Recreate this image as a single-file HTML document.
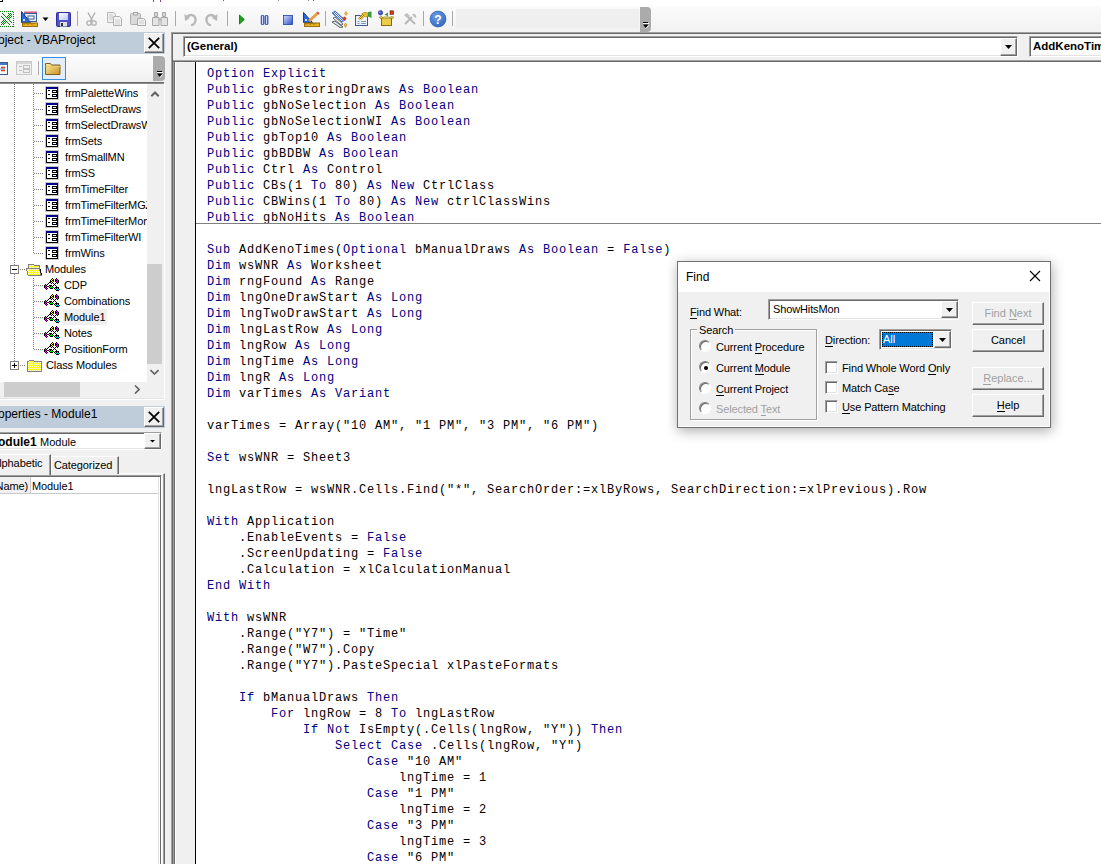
<!DOCTYPE html>
<html><head><meta charset="utf-8">
<style>
*{box-sizing:border-box}
html,body{margin:0;padding:0}
body{width:1101px;height:864px;overflow:hidden;position:relative;background:#F0F0F0;font-family:"Liberation Sans",sans-serif;font-size:11px;color:#000}
.a{position:absolute}
.code{position:absolute;left:196px;top:62px;right:0;bottom:0;background:#fff;overflow:hidden}
.code pre{margin:0;position:absolute;left:11px;top:4px;font-family:"Liberation Mono",monospace;font-size:12px;letter-spacing:0.8px;line-height:16px;color:#000;white-space:pre}
.k{color:#00007F}
.tb{position:absolute;top:6px;left:0;width:1101px;height:26px;background:linear-gradient(#FBFBFB,#F2F2F2)}
.sep{position:absolute;top:11px;width:1px;height:15px;background:#A9A9A9}
.cap{position:absolute;background:#BFCDDB;font-size:12px;height:22px;line-height:16px;white-space:nowrap;overflow:hidden}
.xbtn{position:absolute;width:20px;height:20px;background:#F0F0F0;border-top:1px solid #fff;border-left:1px solid #fff;border-right:1px solid #696969;border-bottom:1px solid #696969;box-shadow:inset -1px -1px #A0A0A0}
.tree{position:absolute;left:0;top:84px;width:147px;height:298px;background:#fff;overflow:hidden}
.ti{position:absolute;white-space:nowrap;font-size:11px;line-height:16px;height:16px;letter-spacing:-0.1px}
.dlg{position:absolute;left:677px;top:261px;width:374px;height:167px;background:#F0F0F0;border:1px solid #777;box-shadow:0 0 10px rgba(0,0,0,0.25)}
.btn{position:absolute;width:72px;height:23px;background:#F0F0F0;border-top:1px solid #fff;border-left:1px solid #fff;border-right:1px solid #696969;border-bottom:1px solid #696969;box-shadow:inset -1px -1px #A0A0A0;text-align:center;line-height:20px;font-size:11px}
.sunk{border-top:1px solid #A0A0A0;border-left:1px solid #A0A0A0;border-right:1px solid #fff;border-bottom:1px solid #fff;box-shadow:inset 1px 1px #696969, inset -1px -1px #E3E3E3}
.t11{font-size:11px;line-height:15px;white-space:nowrap;letter-spacing:-0.12px}
.t12{font-size:12px;line-height:14px;white-space:nowrap}
.ddb{position:absolute;background:#F0F0F0;border-top:1px solid #fff;border-left:1px solid #fff;border-right:1px solid #696969;border-bottom:1px solid #696969;box-shadow:inset -1px -1px #A0A0A0}
.radio{position:absolute;width:12px;height:12px;border-radius:50%;background:#fff;border:1px solid;border-color:#808080 #fff #fff #808080;box-shadow:inset 1px 1px #696969}
.chk{position:absolute;width:13px;height:13px;background:#fff;border-top:1px solid #A0A0A0;border-left:1px solid #A0A0A0;border-right:1px solid #fff;border-bottom:1px solid #fff;box-shadow:inset 1px 1px #696969, inset -1px -1px #E3E3E3}
u{text-decoration:none;border-bottom:1px solid currentColor}
</style></head><body>
<!-- top strip -->
<div class="a" style="left:0;top:0;width:1101px;height:6px;background:#fff"></div>
<div class="a" style="left:0;top:0;width:3px;height:2px;border-right:1px solid #000;border-bottom:1px solid #000"></div>
<div class="a" style="left:153px;top:0;width:1px;height:2px;background:#705080"></div>
<div class="a" style="left:160px;top:0;width:1px;height:2px;background:#705080"></div>
<div class="a" style="left:223px;top:0;width:1px;height:1px;background:#606080"></div>
<div class="a" style="left:278px;top:0;width:1px;height:1px;background:#8090B0"></div>
<div class="a" style="left:308px;top:0;width:1px;height:1px;background:#8090B0"></div>
<div class="a" style="left:313px;top:0;width:1px;height:1px;background:#606080"></div>
<!-- toolbar -->
<div class="tb"></div>
<div class="a" style="left:456px;top:9px;width:183px;height:19px;background:#EFEFEF"></div>
<div class="a" style="left:640px;top:7px;width:11px;height:25px;background:#ABABAB;border-radius:0 4px 4px 0"></div>


<!-- main toolbar icons -->
<svg class="a" style="left:0;top:11px" width="14" height="16" viewBox="0 0 14 16" shape-rendering="crispEdges" fill="#008000"><rect x="0" y="0" width="1" height="1"/><rect x="2" y="0" width="1" height="1"/><rect x="4" y="0" width="1" height="1"/><rect x="6" y="0" width="1" height="1"/><rect x="8" y="0" width="1" height="1"/><rect x="10" y="0" width="1" height="1"/><rect x="12" y="0" width="1" height="1"/><rect x="13" y="1" width="1" height="1"/><rect x="2" y="2" width="1" height="1"/><rect x="8" y="2" width="1" height="1"/><rect x="10" y="2" width="1" height="1"/><rect x="3" y="3" width="1" height="1"/><rect x="9" y="3" width="1" height="1"/><rect x="11" y="3" width="1" height="1"/><rect x="13" y="3" width="1" height="1"/><rect x="4" y="4" width="1" height="1"/><rect x="8" y="4" width="1" height="1"/><rect x="10" y="4" width="1" height="1"/><rect x="1" y="5" width="1" height="1"/><rect x="5" y="5" width="1" height="1"/><rect x="7" y="5" width="1" height="1"/><rect x="9" y="5" width="1" height="1"/><rect x="11" y="5" width="1" height="1"/><rect x="13" y="5" width="1" height="1"/><rect x="2" y="6" width="1" height="1"/><rect x="6" y="6" width="1" height="1"/><rect x="8" y="6" width="1" height="1"/><rect x="10" y="6" width="1" height="1"/><rect x="3" y="7" width="1" height="1"/><rect x="7" y="7" width="1" height="1"/><rect x="9" y="7" width="1" height="1"/><rect x="13" y="7" width="1" height="1"/><rect x="4" y="8" width="1" height="1"/><rect x="8" y="8" width="1" height="1"/><rect x="3" y="9" width="1" height="1"/><rect x="5" y="9" width="1" height="1"/><rect x="9" y="9" width="1" height="1"/><rect x="13" y="9" width="1" height="1"/><rect x="2" y="10" width="1" height="1"/><rect x="4" y="10" width="1" height="1"/><rect x="6" y="10" width="1" height="1"/><rect x="10" y="10" width="1" height="1"/><rect x="1" y="11" width="1" height="1"/><rect x="3" y="11" width="1" height="1"/><rect x="5" y="11" width="1" height="1"/><rect x="7" y="11" width="1" height="1"/><rect x="11" y="11" width="1" height="1"/><rect x="13" y="11" width="1" height="1"/><rect x="2" y="12" width="1" height="1"/><rect x="4" y="12" width="1" height="1"/><rect x="8" y="12" width="1" height="1"/><rect x="1" y="13" width="1" height="1"/><rect x="3" y="13" width="1" height="1"/><rect x="9" y="13" width="1" height="1"/><rect x="13" y="13" width="1" height="1"/><rect x="0" y="15" width="1" height="1"/><rect x="2" y="15" width="1" height="1"/><rect x="4" y="15" width="1" height="1"/><rect x="6" y="15" width="1" height="1"/><rect x="8" y="15" width="1" height="1"/><rect x="10" y="15" width="1" height="1"/><rect x="12" y="15" width="1" height="1"/><rect x="13" y="15" width="1" height="1"/></svg>
<svg class="a" style="left:21px;top:11px" width="17" height="16" viewBox="0 0 17 16"><rect x="3" y="0.5" width="13" height="2" fill="#D46080"/><rect x="3.5" y="2.5" width="12" height="8" fill="#E8EEF8" stroke="#3A5C9A"/><rect x="7" y="5" width="6" height="3" fill="#fff" stroke="#3A5C9A"/><path d="M0.5 0.5L0.5 11.5L9.5 11.5Z" fill="#2A6AD8" stroke="#1A3A8A"/><circle cx="3" cy="9" r="1" fill="#fff"/><rect x="1.5" y="12" width="15" height="3.5" fill="#E8B020" stroke="#9A7010"/><path d="M3 12v2M5 12v1M7 12v2M9 12v1M11 12v2M13 12v1" stroke="#7A5000" stroke-width=".6"/></svg>
<svg class="a" style="left:42px;top:17px" width="7" height="5" viewBox="0 0 7 5"><path d="M0.5 0.5H6.5L3.5 4Z" fill="#000"/></svg>
<svg class="a" style="left:56px;top:12px" width="15" height="15" viewBox="0 0 15 15"><rect x="0.5" y="0.5" width="14" height="14" rx="1" fill="#5050C8" stroke="#30309A"/><rect x="3" y="1" width="9" height="7" fill="#F0F4FF"/><path d="M3 1h9v7h-9z" fill="url(#sv)"/><rect x="4" y="10" width="7" height="4.5" fill="#E0E0E0"/><rect x="5" y="11" width="2" height="3" fill="#303030"/><defs><linearGradient id="sv" x1="0" y1="0" x2="1" y2="1"><stop offset="0" stop-color="#fff"/><stop offset="1" stop-color="#B8C8F0"/></linearGradient></defs></svg>
<div class="sep" style="left:77px"></div>
<svg class="a" style="left:86px;top:12px" width="11" height="14" viewBox="0 0 11 14"><path d="M2 0.5L6.5 9M9 0.5L4.5 9" stroke="#B0B0B0" stroke-width="1.4" fill="none"/><circle cx="3" cy="11" r="2.2" fill="none" stroke="#B0B0B0" stroke-width="1.3"/><circle cx="8" cy="11" r="2.2" fill="none" stroke="#B0B0B0" stroke-width="1.3"/></svg>
<svg class="a" style="left:107px;top:12px" width="16" height="14" viewBox="0 0 16 14"><path d="M0.5 0.5h6l2 2v8h-8z" fill="#EFEFEF" stroke="#B8B8B8"/><path d="M6.5 4.5h6l2 2v7h-8z" fill="#F4F4F4" stroke="#B0B0B0"/><path d="M8 8h5M8 10h5M8 12h5M2 3h4M2 5h4M2 7h4" stroke="#C4C4C4" stroke-width=".8"/></svg>
<svg class="a" style="left:130px;top:12px" width="17" height="14" viewBox="0 0 17 14"><rect x="0.5" y="1.5" width="10" height="11" rx="1" fill="#DADADA" stroke="#B0B0B0"/><rect x="3.5" y="0.5" width="4" height="2.5" fill="#E8E8E8" stroke="#A8A8A8"/><path d="M7.5 6.5h6l2 2v5h-8z" fill="#F2F2F2" stroke="#A8A8A8"/><path d="M9 9h5M9 11h5" stroke="#C0C0C0" stroke-width=".8"/></svg>
<svg class="a" style="left:152px;top:12px" width="16" height="14" viewBox="0 0 16 14"><path d="M2.5 0.5h3v4h-3zM10.5 0.5h3v4h-3z" fill="#D8D8D8" stroke="#A8A8A8"/><path d="M0.5 5.5h6.5v8h-6.5zM9 5.5h6.5v8h-6.5z" fill="#E4E4E4" stroke="#A8A8A8"/><rect x="6.5" y="6" width="3" height="3" fill="#B8B8B8"/></svg>
<div class="sep" style="left:175px"></div>
<svg class="a" style="left:184px;top:12px" width="13" height="14" viewBox="0 0 13 14"><path d="M3 5.5C5 2 11 2 11.5 7C12 11 9 13 7 13.5" stroke="#B8B8B8" stroke-width="2.3" fill="none"/><path d="M0.5 2L1 9L6 6Z" fill="#B8B8B8"/></svg>
<svg class="a" style="left:205px;top:12px" width="13" height="14" viewBox="0 0 13 14"><path d="M10 5.5C8 2 2 2 1.5 7C1 11 4 13 6 13.5" stroke="#B8B8B8" stroke-width="2.3" fill="none"/><path d="M12.5 2L12 9L7 6Z" fill="#B8B8B8"/></svg>
<div class="sep" style="left:227px"></div>
<svg class="a" style="left:238px;top:14px" width="8" height="11" viewBox="0 0 8 11"><path d="M1.5 1L6.3 5.5L1.5 10Z" fill="#20A020" stroke="#0A7A0A" stroke-width=".9" stroke-linejoin="round"/></svg>
<svg class="a" style="left:260px;top:15px" width="10" height="10" viewBox="0 0 10 10"><defs><linearGradient id="pb" x1="0" x2="1"><stop offset="0" stop-color="#2848B8"/><stop offset=".5" stop-color="#D8E4FF"/><stop offset="1" stop-color="#2848B8"/></linearGradient></defs><rect x="1.2" y="0.5" width="2.8" height="9" rx=".6" fill="url(#pb)" stroke="#1A38A0" stroke-width=".7"/><rect x="5.2" y="0.5" width="2.8" height="9" rx=".6" fill="url(#pb)" stroke="#1A38A0" stroke-width=".7"/></svg>
<svg class="a" style="left:283px;top:15px" width="10" height="10" viewBox="0 0 10 10"><defs><linearGradient id="sb" x1="0" y1="0" x2="1" y2="1"><stop offset="0" stop-color="#D0DCFF"/><stop offset="1" stop-color="#3050C8"/></linearGradient></defs><rect x="0.5" y="0.5" width="9" height="9" fill="url(#sb)" stroke="#2040A8" stroke-width=".8"/></svg>
<svg class="a" style="left:303px;top:11px" width="17" height="16" viewBox="0 0 17 16"><path d="M0.5 1.5L0.5 11.5L9.5 11.5Z" fill="#2A6AD8" stroke="#1A3A8A"/><circle cx="3" cy="9" r="1" fill="#fff"/><path d="M6 10L15 2" stroke="#E0A040" stroke-width="3"/><path d="M14 1l2 2" stroke="#D06060" stroke-width="2"/><rect x="1.5" y="12" width="15" height="3.5" fill="#E8B020" stroke="#9A7010"/><path d="M3 12v2M5 12v1M7 12v2M9 12v1M11 12v2M13 12v1" stroke="#7A5000" stroke-width=".6"/></svg>
<div class="sep" style="left:325px"></div>
<svg class="a" style="left:331px;top:10px" width="18" height="18" viewBox="0 0 18 18"><defs><pattern id="bw" width="2" height="2" patternUnits="userSpaceOnUse"><rect width="2" height="2" fill="#3C78E0"/><rect width="1" height="1" fill="#E8F0FF"/><rect x="1" y="1" width="1" height="1" fill="#E8F0FF"/></pattern></defs><path d="M1 3L4 1L14 10L11 12Z" fill="url(#bw)" stroke="#2A58B8" stroke-width=".8"/><path d="M2 8L4 7L12 14L10 15Z" fill="#F4F4F4" stroke="#404850" stroke-width=".8"/><path d="M1 12L4 11L12 17L9 17.5Z" fill="#E0E4EA" stroke="#505860" stroke-width=".9"/><path d="M15 1.5l1.5 2-1.5 2-1.5-2z" fill="#F0C040" stroke="#C08010" stroke-width=".6"/><path d="M14.5 13l1.5 2-1.5 2.5-1.5-2.5z" fill="#F0C040" stroke="#C08010" stroke-width=".6"/><path d="M13.5 6.5l2 1.5-1 2.5-2.5-.5-.5-2z" fill="#E03818"/></svg>
<svg class="a" style="left:355px;top:11px" width="17" height="16" viewBox="0 0 17 16"><defs><pattern id="yk" width="2" height="2" patternUnits="userSpaceOnUse"><rect width="2" height="2" fill="#F4D050"/><rect width="1" height="1" fill="#A07810"/><rect x="1" y="1" width="1" height="1" fill="#A07810"/></pattern></defs><rect x="0.5" y="4.5" width="12" height="10" fill="#EAF2FC" stroke="#3A5A8A"/><path d="M2.5 10.5h2M6 10.5h5M2.5 12.5h2M6 12.5h5" stroke="#7A8AA8" stroke-width=".9"/><path d="M3 8L7 2.5L10 5L6 9Z" fill="url(#yk)"/><path d="M7 2.5Q10 0.5 13 2L13 5.5Q10 6 9.5 5.5Z" fill="#E8C040" stroke="#A88010" stroke-width=".6"/><path d="M13 1L16.5 0.5L16.5 7L13 5.5Z" fill="#3A9A40"/></svg>
<svg class="a" style="left:378px;top:10px" width="17" height="17" viewBox="0 0 17 17"><circle cx="2.5" cy="2.8" r="2.2" fill="#4050C8" stroke="#202878" stroke-width=".6"/><circle cx="2" cy="2.2" r=".7" fill="#B8C8FF"/><path d="M6.5 4.5L10 2.5L10 6.5Z" fill="#40A040"/><rect x="12" y="0.8" width="3.6" height="3.6" fill="#D83820" stroke="#602010" stroke-width=".6"/><path d="M3 9L1 7.2L4 6.5L6 8.5M14 9L16 7.2L13 6.5L11 8.5" fill="#F0D050" stroke="#A08010" stroke-width=".7"/><rect x="3.5" y="8.5" width="10" height="7" fill="#ECCC48" stroke="#8A6A10"/><path d="M3.5 8.5L6 7h5l2.5 1.5" fill="#F8E890" stroke="#8A6A10" stroke-width=".7"/></svg>
<svg class="a" style="left:403px;top:12px" width="14" height="14" viewBox="0 0 14 14"><path d="M2 12L9 5M12 12L5 5" stroke="#B8B8B8" stroke-width="2"/><path d="M1 3l3-2 3 3-3 2zM9 2a3 3 0 0 1 4 4l-2-1z" fill="#C0C0C0"/></svg>
<div class="sep" style="left:423px"></div>
<svg class="a" style="left:429px;top:10px" width="18" height="18" viewBox="0 0 18 18"><defs><radialGradient id="hg" cx="0.4" cy="0.35" r="0.7"><stop offset="0" stop-color="#6FA0E8"/><stop offset="1" stop-color="#2F66C0"/></radialGradient></defs><circle cx="9" cy="9" r="8" fill="url(#hg)" stroke="#2A5AAA" stroke-width=".6"/><text x="9" y="13.5" text-anchor="middle" font-family="Liberation Sans" font-weight="bold" font-size="12" fill="#fff">?</text></svg>
<div class="sep" style="left:452px"></div>
<!-- project panel -->
<div class="cap" style="left:0;top:32px;width:165px;padding-left:0"><span style="position:relative;left:-14px">Project - VBAProject</span></div>
<div class="xbtn" style="left:144px;top:33px"></div>
<div class="a" style="left:0;top:54px;width:165px;height:28px;background:linear-gradient(#FDFDFD,#F0F0F0)"></div>
<div class="a" style="left:0;top:82px;width:164px;height:3px;background:linear-gradient(#696969 0 1px,#8A8A8A 1px 2px,#696969 2px 3px)"></div>
<div class="tree"></div>
<div class="a" style="left:14px;top:84px;width:1px;height:282px;background:repeating-linear-gradient(180deg,#808080 0 1px,transparent 1px 2px)"></div>
<div class="a" style="left:33px;top:84px;width:1px;height:170px;background:repeating-linear-gradient(180deg,#808080 0 1px,transparent 1px 2px)"></div>
<div class="a" style="left:34px;top:93px;width:10px;height:1px;background:repeating-linear-gradient(90deg,#808080 0 1px,transparent 1px 2px)"></div>
<svg class="a" style="left:45px;top:86px" width="14" height="14" viewBox="0 0 14 14"><rect x="0.5" y="0.5" width="13" height="13" fill="none" stroke="#C8C8C8"/><rect x="1.5" y="1.5" width="11" height="11" fill="#fff" stroke="#000"/><rect x="1" y="1" width="12" height="2" fill="#000080"/><path d="M3 4.5H5M3 8.5H5" stroke="#000"/><rect x="7.5" y="4.5" width="4" height="2" fill="none" stroke="#000"/><rect x="7.5" y="8.5" width="4" height="2" fill="none" stroke="#000"/></svg>
<div class="ti" style="left:65px;top:85px">frmPaletteWins</div>
<div class="a" style="left:34px;top:109px;width:10px;height:1px;background:repeating-linear-gradient(90deg,#808080 0 1px,transparent 1px 2px)"></div>
<svg class="a" style="left:45px;top:102px" width="14" height="14" viewBox="0 0 14 14"><rect x="0.5" y="0.5" width="13" height="13" fill="none" stroke="#C8C8C8"/><rect x="1.5" y="1.5" width="11" height="11" fill="#fff" stroke="#000"/><rect x="1" y="1" width="12" height="2" fill="#000080"/><path d="M3 4.5H5M3 8.5H5" stroke="#000"/><rect x="7.5" y="4.5" width="4" height="2" fill="none" stroke="#000"/><rect x="7.5" y="8.5" width="4" height="2" fill="none" stroke="#000"/></svg>
<div class="ti" style="left:65px;top:101px">frmSelectDraws</div>
<div class="a" style="left:34px;top:125px;width:10px;height:1px;background:repeating-linear-gradient(90deg,#808080 0 1px,transparent 1px 2px)"></div>
<svg class="a" style="left:45px;top:118px" width="14" height="14" viewBox="0 0 14 14"><rect x="0.5" y="0.5" width="13" height="13" fill="none" stroke="#C8C8C8"/><rect x="1.5" y="1.5" width="11" height="11" fill="#fff" stroke="#000"/><rect x="1" y="1" width="12" height="2" fill="#000080"/><path d="M3 4.5H5M3 8.5H5" stroke="#000"/><rect x="7.5" y="4.5" width="4" height="2" fill="none" stroke="#000"/><rect x="7.5" y="8.5" width="4" height="2" fill="none" stroke="#000"/></svg>
<div class="ti" style="left:65px;top:117px">frmSelectDrawsWI</div>
<div class="a" style="left:34px;top:141px;width:10px;height:1px;background:repeating-linear-gradient(90deg,#808080 0 1px,transparent 1px 2px)"></div>
<svg class="a" style="left:45px;top:134px" width="14" height="14" viewBox="0 0 14 14"><rect x="0.5" y="0.5" width="13" height="13" fill="none" stroke="#C8C8C8"/><rect x="1.5" y="1.5" width="11" height="11" fill="#fff" stroke="#000"/><rect x="1" y="1" width="12" height="2" fill="#000080"/><path d="M3 4.5H5M3 8.5H5" stroke="#000"/><rect x="7.5" y="4.5" width="4" height="2" fill="none" stroke="#000"/><rect x="7.5" y="8.5" width="4" height="2" fill="none" stroke="#000"/></svg>
<div class="ti" style="left:65px;top:133px">frmSets</div>
<div class="a" style="left:34px;top:157px;width:10px;height:1px;background:repeating-linear-gradient(90deg,#808080 0 1px,transparent 1px 2px)"></div>
<svg class="a" style="left:45px;top:150px" width="14" height="14" viewBox="0 0 14 14"><rect x="0.5" y="0.5" width="13" height="13" fill="none" stroke="#C8C8C8"/><rect x="1.5" y="1.5" width="11" height="11" fill="#fff" stroke="#000"/><rect x="1" y="1" width="12" height="2" fill="#000080"/><path d="M3 4.5H5M3 8.5H5" stroke="#000"/><rect x="7.5" y="4.5" width="4" height="2" fill="none" stroke="#000"/><rect x="7.5" y="8.5" width="4" height="2" fill="none" stroke="#000"/></svg>
<div class="ti" style="left:65px;top:149px">frmSmallMN</div>
<div class="a" style="left:34px;top:173px;width:10px;height:1px;background:repeating-linear-gradient(90deg,#808080 0 1px,transparent 1px 2px)"></div>
<svg class="a" style="left:45px;top:166px" width="14" height="14" viewBox="0 0 14 14"><rect x="0.5" y="0.5" width="13" height="13" fill="none" stroke="#C8C8C8"/><rect x="1.5" y="1.5" width="11" height="11" fill="#fff" stroke="#000"/><rect x="1" y="1" width="12" height="2" fill="#000080"/><path d="M3 4.5H5M3 8.5H5" stroke="#000"/><rect x="7.5" y="4.5" width="4" height="2" fill="none" stroke="#000"/><rect x="7.5" y="8.5" width="4" height="2" fill="none" stroke="#000"/></svg>
<div class="ti" style="left:65px;top:165px">frmSS</div>
<div class="a" style="left:34px;top:189px;width:10px;height:1px;background:repeating-linear-gradient(90deg,#808080 0 1px,transparent 1px 2px)"></div>
<svg class="a" style="left:45px;top:182px" width="14" height="14" viewBox="0 0 14 14"><rect x="0.5" y="0.5" width="13" height="13" fill="none" stroke="#C8C8C8"/><rect x="1.5" y="1.5" width="11" height="11" fill="#fff" stroke="#000"/><rect x="1" y="1" width="12" height="2" fill="#000080"/><path d="M3 4.5H5M3 8.5H5" stroke="#000"/><rect x="7.5" y="4.5" width="4" height="2" fill="none" stroke="#000"/><rect x="7.5" y="8.5" width="4" height="2" fill="none" stroke="#000"/></svg>
<div class="ti" style="left:65px;top:181px">frmTimeFilter</div>
<div class="a" style="left:34px;top:205px;width:10px;height:1px;background:repeating-linear-gradient(90deg,#808080 0 1px,transparent 1px 2px)"></div>
<svg class="a" style="left:45px;top:198px" width="14" height="14" viewBox="0 0 14 14"><rect x="0.5" y="0.5" width="13" height="13" fill="none" stroke="#C8C8C8"/><rect x="1.5" y="1.5" width="11" height="11" fill="#fff" stroke="#000"/><rect x="1" y="1" width="12" height="2" fill="#000080"/><path d="M3 4.5H5M3 8.5H5" stroke="#000"/><rect x="7.5" y="4.5" width="4" height="2" fill="none" stroke="#000"/><rect x="7.5" y="8.5" width="4" height="2" fill="none" stroke="#000"/></svg>
<div class="ti" style="left:65px;top:197px">frmTimeFilterMGZ</div>
<div class="a" style="left:34px;top:221px;width:10px;height:1px;background:repeating-linear-gradient(90deg,#808080 0 1px,transparent 1px 2px)"></div>
<svg class="a" style="left:45px;top:214px" width="14" height="14" viewBox="0 0 14 14"><rect x="0.5" y="0.5" width="13" height="13" fill="none" stroke="#C8C8C8"/><rect x="1.5" y="1.5" width="11" height="11" fill="#fff" stroke="#000"/><rect x="1" y="1" width="12" height="2" fill="#000080"/><path d="M3 4.5H5M3 8.5H5" stroke="#000"/><rect x="7.5" y="4.5" width="4" height="2" fill="none" stroke="#000"/><rect x="7.5" y="8.5" width="4" height="2" fill="none" stroke="#000"/></svg>
<div class="ti" style="left:65px;top:213px">frmTimeFilterMon</div>
<div class="a" style="left:34px;top:237px;width:10px;height:1px;background:repeating-linear-gradient(90deg,#808080 0 1px,transparent 1px 2px)"></div>
<svg class="a" style="left:45px;top:230px" width="14" height="14" viewBox="0 0 14 14"><rect x="0.5" y="0.5" width="13" height="13" fill="none" stroke="#C8C8C8"/><rect x="1.5" y="1.5" width="11" height="11" fill="#fff" stroke="#000"/><rect x="1" y="1" width="12" height="2" fill="#000080"/><path d="M3 4.5H5M3 8.5H5" stroke="#000"/><rect x="7.5" y="4.5" width="4" height="2" fill="none" stroke="#000"/><rect x="7.5" y="8.5" width="4" height="2" fill="none" stroke="#000"/></svg>
<div class="ti" style="left:65px;top:229px">frmTimeFilterWI</div>
<div class="a" style="left:34px;top:253px;width:10px;height:1px;background:repeating-linear-gradient(90deg,#808080 0 1px,transparent 1px 2px)"></div>
<svg class="a" style="left:45px;top:246px" width="14" height="14" viewBox="0 0 14 14"><rect x="0.5" y="0.5" width="13" height="13" fill="none" stroke="#C8C8C8"/><rect x="1.5" y="1.5" width="11" height="11" fill="#fff" stroke="#000"/><rect x="1" y="1" width="12" height="2" fill="#000080"/><path d="M3 4.5H5M3 8.5H5" stroke="#000"/><rect x="7.5" y="4.5" width="4" height="2" fill="none" stroke="#000"/><rect x="7.5" y="8.5" width="4" height="2" fill="none" stroke="#000"/></svg>
<div class="ti" style="left:65px;top:245px">frmWins</div>
<div class="a" style="left:20px;top:269px;width:6px;height:1px;background:repeating-linear-gradient(90deg,#808080 0 1px,transparent 1px 2px)"></div>
<div class="a" style="left:10px;top:265px;width:9px;height:9px;border:1px solid #808080;background:#fff"><div style="position:absolute;left:1px;top:3px;width:5px;height:1px;background:#000"></div></div>
<svg class="a" style="left:26px;top:263px" width="16" height="13" viewBox="0 0 16 13" shape-rendering="crispEdges"><defs><pattern id="dy" width="2" height="2" patternUnits="userSpaceOnUse"><rect width="2" height="2" fill="#FFFF00"/><rect width="1" height="1" fill="#FFFFC0"/><rect x="1" y="1" width="1" height="1" fill="#FFFFC0"/></pattern></defs><path d="M2.5 1.5h5l1 1h5v4h-11z" fill="url(#dy)" stroke="#808080"/><path d="M0.5 5.5h13l1.5 6.5h-13z" fill="url(#dy)" stroke="#808080"/><path d="M14 6l1.5 6" stroke="#000"/></svg>
<div class="ti" style="left:45px;top:261px">Modules</div>
<div class="a" style="left:33px;top:278px;width:1px;height:72px;background:repeating-linear-gradient(180deg,#808080 0 1px,transparent 1px 2px)"></div>
<div class="a" style="left:34px;top:285px;width:9px;height:1px;background:repeating-linear-gradient(90deg,#808080 0 1px,transparent 1px 2px)"></div>
<svg class="a" style="left:40px;top:276px" width="22" height="16" viewBox="0 0 22 16" shape-rendering="crispEdges"><rect x="12" y="2" width="1" height="1" fill="#000"/><rect x="16" y="2" width="1" height="1" fill="#000"/><rect x="11" y="3" width="1" height="1" fill="#000"/><rect x="12" y="3" width="1" height="1" fill="#FFFF00"/><rect x="13" y="3" width="1" height="1" fill="#000"/><rect x="15" y="3" width="1" height="1" fill="#000"/><rect x="16" y="3" width="1" height="1" fill="#FF00FF"/><rect x="17" y="3" width="1" height="1" fill="#000"/><rect x="10" y="4" width="1" height="1" fill="#000"/><rect x="11" y="4" width="1" height="1" fill="#FFFF00"/><rect x="12" y="4" width="1" height="1" fill="#000"/><rect x="13" y="4" width="1" height="1" fill="#000"/><rect x="15" y="4" width="1" height="1" fill="#000"/><rect x="16" y="4" width="1" height="1" fill="#000"/><rect x="17" y="4" width="1" height="1" fill="#FF00FF"/><rect x="18" y="4" width="1" height="1" fill="#000"/><rect x="10" y="5" width="1" height="1" fill="#000"/><rect x="11" y="5" width="1" height="1" fill="#000"/><rect x="12" y="5" width="1" height="1" fill="#FFFF00"/><rect x="13" y="5" width="1" height="1" fill="#000"/><rect x="15" y="5" width="1" height="1" fill="#000"/><rect x="16" y="5" width="1" height="1" fill="#FF00FF"/><rect x="17" y="5" width="1" height="1" fill="#000"/><rect x="18" y="5" width="1" height="1" fill="#000"/><rect x="9" y="6" width="1" height="1" fill="#000"/><rect x="10" y="6" width="1" height="1" fill="#000"/><rect x="11" y="6" width="1" height="1" fill="#FFFF00"/><rect x="12" y="6" width="1" height="1" fill="#000"/><rect x="16" y="6" width="1" height="1" fill="#000"/><rect x="17" y="6" width="1" height="1" fill="#FF00FF"/><rect x="18" y="6" width="1" height="1" fill="#000"/><rect x="8" y="7" width="1" height="1" fill="#000"/><rect x="11" y="7" width="1" height="1" fill="#000"/><rect x="13" y="7" width="1" height="1" fill="#000"/><rect x="15" y="7" width="1" height="1" fill="#000"/><rect x="17" y="7" width="1" height="1" fill="#000"/><rect x="5" y="8" width="1" height="1" fill="#000"/><rect x="7" y="8" width="1" height="1" fill="#000"/><rect x="14" y="8" width="1" height="1" fill="#000"/><rect x="4" y="9" width="1" height="1" fill="#000"/><rect x="5" y="9" width="1" height="1" fill="#FF00FF"/><rect x="6" y="9" width="1" height="1" fill="#000"/><rect x="9" y="9" width="1" height="1" fill="#000"/><rect x="10" y="9" width="1" height="1" fill="#000"/><rect x="11" y="9" width="1" height="1" fill="#000"/><rect x="13" y="9" width="1" height="1" fill="#000"/><rect x="15" y="9" width="1" height="1" fill="#000"/><rect x="4" y="10" width="1" height="1" fill="#000"/><rect x="5" y="10" width="1" height="1" fill="#000"/><rect x="6" y="10" width="1" height="1" fill="#FF00FF"/><rect x="7" y="10" width="1" height="1" fill="#000"/><rect x="8" y="10" width="1" height="1" fill="#000"/><rect x="9" y="10" width="1" height="1" fill="#00FF00"/><rect x="10" y="10" width="1" height="1" fill="#000"/><rect x="11" y="10" width="1" height="1" fill="#00FF00"/><rect x="12" y="10" width="1" height="1" fill="#000"/><rect x="16" y="10" width="1" height="1" fill="#000"/><rect x="4" y="11" width="1" height="1" fill="#000"/><rect x="5" y="11" width="1" height="1" fill="#FF00FF"/><rect x="6" y="11" width="1" height="1" fill="#000"/><rect x="9" y="11" width="1" height="1" fill="#000"/><rect x="10" y="11" width="1" height="1" fill="#00FF00"/><rect x="11" y="11" width="1" height="1" fill="#000"/><rect x="12" y="11" width="1" height="1" fill="#00FF00"/><rect x="13" y="11" width="1" height="1" fill="#000"/><rect x="15" y="11" width="1" height="1" fill="#000"/><rect x="16" y="11" width="1" height="1" fill="#000"/><rect x="17" y="11" width="1" height="1" fill="#000"/><rect x="18" y="11" width="1" height="1" fill="#000"/><rect x="5" y="12" width="1" height="1" fill="#000"/><rect x="6" y="12" width="1" height="1" fill="#FF00FF"/><rect x="7" y="12" width="1" height="1" fill="#000"/><rect x="10" y="12" width="1" height="1" fill="#000"/><rect x="11" y="12" width="1" height="1" fill="#000"/><rect x="12" y="12" width="1" height="1" fill="#000"/><rect x="14" y="12" width="1" height="1" fill="#000"/><rect x="15" y="12" width="1" height="1" fill="#00FFFF"/><rect x="16" y="12" width="1" height="1" fill="#000"/><rect x="17" y="12" width="1" height="1" fill="#00FFFF"/><rect x="18" y="12" width="1" height="1" fill="#000"/><rect x="6" y="13" width="1" height="1" fill="#000"/><rect x="15" y="13" width="1" height="1" fill="#000"/><rect x="16" y="13" width="1" height="1" fill="#00FFFF"/><rect x="17" y="13" width="1" height="1" fill="#000"/><rect x="18" y="13" width="1" height="1" fill="#00FFFF"/><rect x="19" y="13" width="1" height="1" fill="#000"/><rect x="16" y="14" width="1" height="1" fill="#000"/><rect x="17" y="14" width="1" height="1" fill="#000"/><rect x="18" y="14" width="1" height="1" fill="#000"/></svg>
<div class="ti" style="left:64px;top:277px">CDP</div>
<div class="a" style="left:34px;top:301px;width:9px;height:1px;background:repeating-linear-gradient(90deg,#808080 0 1px,transparent 1px 2px)"></div>
<svg class="a" style="left:40px;top:292px" width="22" height="16" viewBox="0 0 22 16" shape-rendering="crispEdges"><rect x="12" y="2" width="1" height="1" fill="#000"/><rect x="16" y="2" width="1" height="1" fill="#000"/><rect x="11" y="3" width="1" height="1" fill="#000"/><rect x="12" y="3" width="1" height="1" fill="#FFFF00"/><rect x="13" y="3" width="1" height="1" fill="#000"/><rect x="15" y="3" width="1" height="1" fill="#000"/><rect x="16" y="3" width="1" height="1" fill="#FF00FF"/><rect x="17" y="3" width="1" height="1" fill="#000"/><rect x="10" y="4" width="1" height="1" fill="#000"/><rect x="11" y="4" width="1" height="1" fill="#FFFF00"/><rect x="12" y="4" width="1" height="1" fill="#000"/><rect x="13" y="4" width="1" height="1" fill="#000"/><rect x="15" y="4" width="1" height="1" fill="#000"/><rect x="16" y="4" width="1" height="1" fill="#000"/><rect x="17" y="4" width="1" height="1" fill="#FF00FF"/><rect x="18" y="4" width="1" height="1" fill="#000"/><rect x="10" y="5" width="1" height="1" fill="#000"/><rect x="11" y="5" width="1" height="1" fill="#000"/><rect x="12" y="5" width="1" height="1" fill="#FFFF00"/><rect x="13" y="5" width="1" height="1" fill="#000"/><rect x="15" y="5" width="1" height="1" fill="#000"/><rect x="16" y="5" width="1" height="1" fill="#FF00FF"/><rect x="17" y="5" width="1" height="1" fill="#000"/><rect x="18" y="5" width="1" height="1" fill="#000"/><rect x="9" y="6" width="1" height="1" fill="#000"/><rect x="10" y="6" width="1" height="1" fill="#000"/><rect x="11" y="6" width="1" height="1" fill="#FFFF00"/><rect x="12" y="6" width="1" height="1" fill="#000"/><rect x="16" y="6" width="1" height="1" fill="#000"/><rect x="17" y="6" width="1" height="1" fill="#FF00FF"/><rect x="18" y="6" width="1" height="1" fill="#000"/><rect x="8" y="7" width="1" height="1" fill="#000"/><rect x="11" y="7" width="1" height="1" fill="#000"/><rect x="13" y="7" width="1" height="1" fill="#000"/><rect x="15" y="7" width="1" height="1" fill="#000"/><rect x="17" y="7" width="1" height="1" fill="#000"/><rect x="5" y="8" width="1" height="1" fill="#000"/><rect x="7" y="8" width="1" height="1" fill="#000"/><rect x="14" y="8" width="1" height="1" fill="#000"/><rect x="4" y="9" width="1" height="1" fill="#000"/><rect x="5" y="9" width="1" height="1" fill="#FF00FF"/><rect x="6" y="9" width="1" height="1" fill="#000"/><rect x="9" y="9" width="1" height="1" fill="#000"/><rect x="10" y="9" width="1" height="1" fill="#000"/><rect x="11" y="9" width="1" height="1" fill="#000"/><rect x="13" y="9" width="1" height="1" fill="#000"/><rect x="15" y="9" width="1" height="1" fill="#000"/><rect x="4" y="10" width="1" height="1" fill="#000"/><rect x="5" y="10" width="1" height="1" fill="#000"/><rect x="6" y="10" width="1" height="1" fill="#FF00FF"/><rect x="7" y="10" width="1" height="1" fill="#000"/><rect x="8" y="10" width="1" height="1" fill="#000"/><rect x="9" y="10" width="1" height="1" fill="#00FF00"/><rect x="10" y="10" width="1" height="1" fill="#000"/><rect x="11" y="10" width="1" height="1" fill="#00FF00"/><rect x="12" y="10" width="1" height="1" fill="#000"/><rect x="16" y="10" width="1" height="1" fill="#000"/><rect x="4" y="11" width="1" height="1" fill="#000"/><rect x="5" y="11" width="1" height="1" fill="#FF00FF"/><rect x="6" y="11" width="1" height="1" fill="#000"/><rect x="9" y="11" width="1" height="1" fill="#000"/><rect x="10" y="11" width="1" height="1" fill="#00FF00"/><rect x="11" y="11" width="1" height="1" fill="#000"/><rect x="12" y="11" width="1" height="1" fill="#00FF00"/><rect x="13" y="11" width="1" height="1" fill="#000"/><rect x="15" y="11" width="1" height="1" fill="#000"/><rect x="16" y="11" width="1" height="1" fill="#000"/><rect x="17" y="11" width="1" height="1" fill="#000"/><rect x="18" y="11" width="1" height="1" fill="#000"/><rect x="5" y="12" width="1" height="1" fill="#000"/><rect x="6" y="12" width="1" height="1" fill="#FF00FF"/><rect x="7" y="12" width="1" height="1" fill="#000"/><rect x="10" y="12" width="1" height="1" fill="#000"/><rect x="11" y="12" width="1" height="1" fill="#000"/><rect x="12" y="12" width="1" height="1" fill="#000"/><rect x="14" y="12" width="1" height="1" fill="#000"/><rect x="15" y="12" width="1" height="1" fill="#00FFFF"/><rect x="16" y="12" width="1" height="1" fill="#000"/><rect x="17" y="12" width="1" height="1" fill="#00FFFF"/><rect x="18" y="12" width="1" height="1" fill="#000"/><rect x="6" y="13" width="1" height="1" fill="#000"/><rect x="15" y="13" width="1" height="1" fill="#000"/><rect x="16" y="13" width="1" height="1" fill="#00FFFF"/><rect x="17" y="13" width="1" height="1" fill="#000"/><rect x="18" y="13" width="1" height="1" fill="#00FFFF"/><rect x="19" y="13" width="1" height="1" fill="#000"/><rect x="16" y="14" width="1" height="1" fill="#000"/><rect x="17" y="14" width="1" height="1" fill="#000"/><rect x="18" y="14" width="1" height="1" fill="#000"/></svg>
<div class="ti" style="left:64px;top:293px">Combinations</div>
<div class="a" style="left:34px;top:317px;width:9px;height:1px;background:repeating-linear-gradient(90deg,#808080 0 1px,transparent 1px 2px)"></div>
<svg class="a" style="left:40px;top:308px" width="22" height="16" viewBox="0 0 22 16" shape-rendering="crispEdges"><rect x="12" y="2" width="1" height="1" fill="#000"/><rect x="16" y="2" width="1" height="1" fill="#000"/><rect x="11" y="3" width="1" height="1" fill="#000"/><rect x="12" y="3" width="1" height="1" fill="#FFFF00"/><rect x="13" y="3" width="1" height="1" fill="#000"/><rect x="15" y="3" width="1" height="1" fill="#000"/><rect x="16" y="3" width="1" height="1" fill="#FF00FF"/><rect x="17" y="3" width="1" height="1" fill="#000"/><rect x="10" y="4" width="1" height="1" fill="#000"/><rect x="11" y="4" width="1" height="1" fill="#FFFF00"/><rect x="12" y="4" width="1" height="1" fill="#000"/><rect x="13" y="4" width="1" height="1" fill="#000"/><rect x="15" y="4" width="1" height="1" fill="#000"/><rect x="16" y="4" width="1" height="1" fill="#000"/><rect x="17" y="4" width="1" height="1" fill="#FF00FF"/><rect x="18" y="4" width="1" height="1" fill="#000"/><rect x="10" y="5" width="1" height="1" fill="#000"/><rect x="11" y="5" width="1" height="1" fill="#000"/><rect x="12" y="5" width="1" height="1" fill="#FFFF00"/><rect x="13" y="5" width="1" height="1" fill="#000"/><rect x="15" y="5" width="1" height="1" fill="#000"/><rect x="16" y="5" width="1" height="1" fill="#FF00FF"/><rect x="17" y="5" width="1" height="1" fill="#000"/><rect x="18" y="5" width="1" height="1" fill="#000"/><rect x="9" y="6" width="1" height="1" fill="#000"/><rect x="10" y="6" width="1" height="1" fill="#000"/><rect x="11" y="6" width="1" height="1" fill="#FFFF00"/><rect x="12" y="6" width="1" height="1" fill="#000"/><rect x="16" y="6" width="1" height="1" fill="#000"/><rect x="17" y="6" width="1" height="1" fill="#FF00FF"/><rect x="18" y="6" width="1" height="1" fill="#000"/><rect x="8" y="7" width="1" height="1" fill="#000"/><rect x="11" y="7" width="1" height="1" fill="#000"/><rect x="13" y="7" width="1" height="1" fill="#000"/><rect x="15" y="7" width="1" height="1" fill="#000"/><rect x="17" y="7" width="1" height="1" fill="#000"/><rect x="5" y="8" width="1" height="1" fill="#000"/><rect x="7" y="8" width="1" height="1" fill="#000"/><rect x="14" y="8" width="1" height="1" fill="#000"/><rect x="4" y="9" width="1" height="1" fill="#000"/><rect x="5" y="9" width="1" height="1" fill="#FF00FF"/><rect x="6" y="9" width="1" height="1" fill="#000"/><rect x="9" y="9" width="1" height="1" fill="#000"/><rect x="10" y="9" width="1" height="1" fill="#000"/><rect x="11" y="9" width="1" height="1" fill="#000"/><rect x="13" y="9" width="1" height="1" fill="#000"/><rect x="15" y="9" width="1" height="1" fill="#000"/><rect x="4" y="10" width="1" height="1" fill="#000"/><rect x="5" y="10" width="1" height="1" fill="#000"/><rect x="6" y="10" width="1" height="1" fill="#FF00FF"/><rect x="7" y="10" width="1" height="1" fill="#000"/><rect x="8" y="10" width="1" height="1" fill="#000"/><rect x="9" y="10" width="1" height="1" fill="#00FF00"/><rect x="10" y="10" width="1" height="1" fill="#000"/><rect x="11" y="10" width="1" height="1" fill="#00FF00"/><rect x="12" y="10" width="1" height="1" fill="#000"/><rect x="16" y="10" width="1" height="1" fill="#000"/><rect x="4" y="11" width="1" height="1" fill="#000"/><rect x="5" y="11" width="1" height="1" fill="#FF00FF"/><rect x="6" y="11" width="1" height="1" fill="#000"/><rect x="9" y="11" width="1" height="1" fill="#000"/><rect x="10" y="11" width="1" height="1" fill="#00FF00"/><rect x="11" y="11" width="1" height="1" fill="#000"/><rect x="12" y="11" width="1" height="1" fill="#00FF00"/><rect x="13" y="11" width="1" height="1" fill="#000"/><rect x="15" y="11" width="1" height="1" fill="#000"/><rect x="16" y="11" width="1" height="1" fill="#000"/><rect x="17" y="11" width="1" height="1" fill="#000"/><rect x="18" y="11" width="1" height="1" fill="#000"/><rect x="5" y="12" width="1" height="1" fill="#000"/><rect x="6" y="12" width="1" height="1" fill="#FF00FF"/><rect x="7" y="12" width="1" height="1" fill="#000"/><rect x="10" y="12" width="1" height="1" fill="#000"/><rect x="11" y="12" width="1" height="1" fill="#000"/><rect x="12" y="12" width="1" height="1" fill="#000"/><rect x="14" y="12" width="1" height="1" fill="#000"/><rect x="15" y="12" width="1" height="1" fill="#00FFFF"/><rect x="16" y="12" width="1" height="1" fill="#000"/><rect x="17" y="12" width="1" height="1" fill="#00FFFF"/><rect x="18" y="12" width="1" height="1" fill="#000"/><rect x="6" y="13" width="1" height="1" fill="#000"/><rect x="15" y="13" width="1" height="1" fill="#000"/><rect x="16" y="13" width="1" height="1" fill="#00FFFF"/><rect x="17" y="13" width="1" height="1" fill="#000"/><rect x="18" y="13" width="1" height="1" fill="#00FFFF"/><rect x="19" y="13" width="1" height="1" fill="#000"/><rect x="16" y="14" width="1" height="1" fill="#000"/><rect x="17" y="14" width="1" height="1" fill="#000"/><rect x="18" y="14" width="1" height="1" fill="#000"/></svg>
<div class="a" style="left:63px;top:309px;width:44px;height:16px;background:#F0F0F0"></div>
<div class="ti" style="left:64px;top:309px">Module1</div>
<div class="a" style="left:34px;top:333px;width:9px;height:1px;background:repeating-linear-gradient(90deg,#808080 0 1px,transparent 1px 2px)"></div>
<svg class="a" style="left:40px;top:324px" width="22" height="16" viewBox="0 0 22 16" shape-rendering="crispEdges"><rect x="12" y="2" width="1" height="1" fill="#000"/><rect x="16" y="2" width="1" height="1" fill="#000"/><rect x="11" y="3" width="1" height="1" fill="#000"/><rect x="12" y="3" width="1" height="1" fill="#FFFF00"/><rect x="13" y="3" width="1" height="1" fill="#000"/><rect x="15" y="3" width="1" height="1" fill="#000"/><rect x="16" y="3" width="1" height="1" fill="#FF00FF"/><rect x="17" y="3" width="1" height="1" fill="#000"/><rect x="10" y="4" width="1" height="1" fill="#000"/><rect x="11" y="4" width="1" height="1" fill="#FFFF00"/><rect x="12" y="4" width="1" height="1" fill="#000"/><rect x="13" y="4" width="1" height="1" fill="#000"/><rect x="15" y="4" width="1" height="1" fill="#000"/><rect x="16" y="4" width="1" height="1" fill="#000"/><rect x="17" y="4" width="1" height="1" fill="#FF00FF"/><rect x="18" y="4" width="1" height="1" fill="#000"/><rect x="10" y="5" width="1" height="1" fill="#000"/><rect x="11" y="5" width="1" height="1" fill="#000"/><rect x="12" y="5" width="1" height="1" fill="#FFFF00"/><rect x="13" y="5" width="1" height="1" fill="#000"/><rect x="15" y="5" width="1" height="1" fill="#000"/><rect x="16" y="5" width="1" height="1" fill="#FF00FF"/><rect x="17" y="5" width="1" height="1" fill="#000"/><rect x="18" y="5" width="1" height="1" fill="#000"/><rect x="9" y="6" width="1" height="1" fill="#000"/><rect x="10" y="6" width="1" height="1" fill="#000"/><rect x="11" y="6" width="1" height="1" fill="#FFFF00"/><rect x="12" y="6" width="1" height="1" fill="#000"/><rect x="16" y="6" width="1" height="1" fill="#000"/><rect x="17" y="6" width="1" height="1" fill="#FF00FF"/><rect x="18" y="6" width="1" height="1" fill="#000"/><rect x="8" y="7" width="1" height="1" fill="#000"/><rect x="11" y="7" width="1" height="1" fill="#000"/><rect x="13" y="7" width="1" height="1" fill="#000"/><rect x="15" y="7" width="1" height="1" fill="#000"/><rect x="17" y="7" width="1" height="1" fill="#000"/><rect x="5" y="8" width="1" height="1" fill="#000"/><rect x="7" y="8" width="1" height="1" fill="#000"/><rect x="14" y="8" width="1" height="1" fill="#000"/><rect x="4" y="9" width="1" height="1" fill="#000"/><rect x="5" y="9" width="1" height="1" fill="#FF00FF"/><rect x="6" y="9" width="1" height="1" fill="#000"/><rect x="9" y="9" width="1" height="1" fill="#000"/><rect x="10" y="9" width="1" height="1" fill="#000"/><rect x="11" y="9" width="1" height="1" fill="#000"/><rect x="13" y="9" width="1" height="1" fill="#000"/><rect x="15" y="9" width="1" height="1" fill="#000"/><rect x="4" y="10" width="1" height="1" fill="#000"/><rect x="5" y="10" width="1" height="1" fill="#000"/><rect x="6" y="10" width="1" height="1" fill="#FF00FF"/><rect x="7" y="10" width="1" height="1" fill="#000"/><rect x="8" y="10" width="1" height="1" fill="#000"/><rect x="9" y="10" width="1" height="1" fill="#00FF00"/><rect x="10" y="10" width="1" height="1" fill="#000"/><rect x="11" y="10" width="1" height="1" fill="#00FF00"/><rect x="12" y="10" width="1" height="1" fill="#000"/><rect x="16" y="10" width="1" height="1" fill="#000"/><rect x="4" y="11" width="1" height="1" fill="#000"/><rect x="5" y="11" width="1" height="1" fill="#FF00FF"/><rect x="6" y="11" width="1" height="1" fill="#000"/><rect x="9" y="11" width="1" height="1" fill="#000"/><rect x="10" y="11" width="1" height="1" fill="#00FF00"/><rect x="11" y="11" width="1" height="1" fill="#000"/><rect x="12" y="11" width="1" height="1" fill="#00FF00"/><rect x="13" y="11" width="1" height="1" fill="#000"/><rect x="15" y="11" width="1" height="1" fill="#000"/><rect x="16" y="11" width="1" height="1" fill="#000"/><rect x="17" y="11" width="1" height="1" fill="#000"/><rect x="18" y="11" width="1" height="1" fill="#000"/><rect x="5" y="12" width="1" height="1" fill="#000"/><rect x="6" y="12" width="1" height="1" fill="#FF00FF"/><rect x="7" y="12" width="1" height="1" fill="#000"/><rect x="10" y="12" width="1" height="1" fill="#000"/><rect x="11" y="12" width="1" height="1" fill="#000"/><rect x="12" y="12" width="1" height="1" fill="#000"/><rect x="14" y="12" width="1" height="1" fill="#000"/><rect x="15" y="12" width="1" height="1" fill="#00FFFF"/><rect x="16" y="12" width="1" height="1" fill="#000"/><rect x="17" y="12" width="1" height="1" fill="#00FFFF"/><rect x="18" y="12" width="1" height="1" fill="#000"/><rect x="6" y="13" width="1" height="1" fill="#000"/><rect x="15" y="13" width="1" height="1" fill="#000"/><rect x="16" y="13" width="1" height="1" fill="#00FFFF"/><rect x="17" y="13" width="1" height="1" fill="#000"/><rect x="18" y="13" width="1" height="1" fill="#00FFFF"/><rect x="19" y="13" width="1" height="1" fill="#000"/><rect x="16" y="14" width="1" height="1" fill="#000"/><rect x="17" y="14" width="1" height="1" fill="#000"/><rect x="18" y="14" width="1" height="1" fill="#000"/></svg>
<div class="ti" style="left:64px;top:325px">Notes</div>
<div class="a" style="left:34px;top:349px;width:9px;height:1px;background:repeating-linear-gradient(90deg,#808080 0 1px,transparent 1px 2px)"></div>
<svg class="a" style="left:40px;top:340px" width="22" height="16" viewBox="0 0 22 16" shape-rendering="crispEdges"><rect x="12" y="2" width="1" height="1" fill="#000"/><rect x="16" y="2" width="1" height="1" fill="#000"/><rect x="11" y="3" width="1" height="1" fill="#000"/><rect x="12" y="3" width="1" height="1" fill="#FFFF00"/><rect x="13" y="3" width="1" height="1" fill="#000"/><rect x="15" y="3" width="1" height="1" fill="#000"/><rect x="16" y="3" width="1" height="1" fill="#FF00FF"/><rect x="17" y="3" width="1" height="1" fill="#000"/><rect x="10" y="4" width="1" height="1" fill="#000"/><rect x="11" y="4" width="1" height="1" fill="#FFFF00"/><rect x="12" y="4" width="1" height="1" fill="#000"/><rect x="13" y="4" width="1" height="1" fill="#000"/><rect x="15" y="4" width="1" height="1" fill="#000"/><rect x="16" y="4" width="1" height="1" fill="#000"/><rect x="17" y="4" width="1" height="1" fill="#FF00FF"/><rect x="18" y="4" width="1" height="1" fill="#000"/><rect x="10" y="5" width="1" height="1" fill="#000"/><rect x="11" y="5" width="1" height="1" fill="#000"/><rect x="12" y="5" width="1" height="1" fill="#FFFF00"/><rect x="13" y="5" width="1" height="1" fill="#000"/><rect x="15" y="5" width="1" height="1" fill="#000"/><rect x="16" y="5" width="1" height="1" fill="#FF00FF"/><rect x="17" y="5" width="1" height="1" fill="#000"/><rect x="18" y="5" width="1" height="1" fill="#000"/><rect x="9" y="6" width="1" height="1" fill="#000"/><rect x="10" y="6" width="1" height="1" fill="#000"/><rect x="11" y="6" width="1" height="1" fill="#FFFF00"/><rect x="12" y="6" width="1" height="1" fill="#000"/><rect x="16" y="6" width="1" height="1" fill="#000"/><rect x="17" y="6" width="1" height="1" fill="#FF00FF"/><rect x="18" y="6" width="1" height="1" fill="#000"/><rect x="8" y="7" width="1" height="1" fill="#000"/><rect x="11" y="7" width="1" height="1" fill="#000"/><rect x="13" y="7" width="1" height="1" fill="#000"/><rect x="15" y="7" width="1" height="1" fill="#000"/><rect x="17" y="7" width="1" height="1" fill="#000"/><rect x="5" y="8" width="1" height="1" fill="#000"/><rect x="7" y="8" width="1" height="1" fill="#000"/><rect x="14" y="8" width="1" height="1" fill="#000"/><rect x="4" y="9" width="1" height="1" fill="#000"/><rect x="5" y="9" width="1" height="1" fill="#FF00FF"/><rect x="6" y="9" width="1" height="1" fill="#000"/><rect x="9" y="9" width="1" height="1" fill="#000"/><rect x="10" y="9" width="1" height="1" fill="#000"/><rect x="11" y="9" width="1" height="1" fill="#000"/><rect x="13" y="9" width="1" height="1" fill="#000"/><rect x="15" y="9" width="1" height="1" fill="#000"/><rect x="4" y="10" width="1" height="1" fill="#000"/><rect x="5" y="10" width="1" height="1" fill="#000"/><rect x="6" y="10" width="1" height="1" fill="#FF00FF"/><rect x="7" y="10" width="1" height="1" fill="#000"/><rect x="8" y="10" width="1" height="1" fill="#000"/><rect x="9" y="10" width="1" height="1" fill="#00FF00"/><rect x="10" y="10" width="1" height="1" fill="#000"/><rect x="11" y="10" width="1" height="1" fill="#00FF00"/><rect x="12" y="10" width="1" height="1" fill="#000"/><rect x="16" y="10" width="1" height="1" fill="#000"/><rect x="4" y="11" width="1" height="1" fill="#000"/><rect x="5" y="11" width="1" height="1" fill="#FF00FF"/><rect x="6" y="11" width="1" height="1" fill="#000"/><rect x="9" y="11" width="1" height="1" fill="#000"/><rect x="10" y="11" width="1" height="1" fill="#00FF00"/><rect x="11" y="11" width="1" height="1" fill="#000"/><rect x="12" y="11" width="1" height="1" fill="#00FF00"/><rect x="13" y="11" width="1" height="1" fill="#000"/><rect x="15" y="11" width="1" height="1" fill="#000"/><rect x="16" y="11" width="1" height="1" fill="#000"/><rect x="17" y="11" width="1" height="1" fill="#000"/><rect x="18" y="11" width="1" height="1" fill="#000"/><rect x="5" y="12" width="1" height="1" fill="#000"/><rect x="6" y="12" width="1" height="1" fill="#FF00FF"/><rect x="7" y="12" width="1" height="1" fill="#000"/><rect x="10" y="12" width="1" height="1" fill="#000"/><rect x="11" y="12" width="1" height="1" fill="#000"/><rect x="12" y="12" width="1" height="1" fill="#000"/><rect x="14" y="12" width="1" height="1" fill="#000"/><rect x="15" y="12" width="1" height="1" fill="#00FFFF"/><rect x="16" y="12" width="1" height="1" fill="#000"/><rect x="17" y="12" width="1" height="1" fill="#00FFFF"/><rect x="18" y="12" width="1" height="1" fill="#000"/><rect x="6" y="13" width="1" height="1" fill="#000"/><rect x="15" y="13" width="1" height="1" fill="#000"/><rect x="16" y="13" width="1" height="1" fill="#00FFFF"/><rect x="17" y="13" width="1" height="1" fill="#000"/><rect x="18" y="13" width="1" height="1" fill="#00FFFF"/><rect x="19" y="13" width="1" height="1" fill="#000"/><rect x="16" y="14" width="1" height="1" fill="#000"/><rect x="17" y="14" width="1" height="1" fill="#000"/><rect x="18" y="14" width="1" height="1" fill="#000"/></svg>
<div class="ti" style="left:64px;top:341px">PositionForm</div>
<div class="a" style="left:20px;top:365px;width:6px;height:1px;background:repeating-linear-gradient(90deg,#808080 0 1px,transparent 1px 2px)"></div>
<div class="a" style="left:10px;top:361px;width:9px;height:9px;border:1px solid #808080;background:#fff"><div style="position:absolute;left:1px;top:3px;width:5px;height:1px;background:#000"></div><div style="position:absolute;left:3px;top:1px;width:1px;height:5px;background:#000"></div></div>
<svg class="a" style="left:27px;top:359px" width="15" height="13" viewBox="0 0 15 13" shape-rendering="crispEdges"><path d="M0.5 2.5h1l1 -1.5h4l1 1.5h7v10h-14z" fill="url(#dy)" stroke="#808080"/></svg>
<div class="ti" style="left:46px;top:357px">Class Modules</div>
<div class="a" style="left:147px;top:84px;width:17px;height:298px;background:#F0F0F0"></div>
<div class="a" style="left:147px;top:264px;width:15px;height:100px;background:#CDCDCD"></div>
<div class="a" style="left:0;top:382px;width:147px;height:16px;background:#F0F0F0"></div>
<div class="a" style="left:4px;top:382px;width:76px;height:15px;background:#CDCDCD"></div>

<!-- properties panel -->
<div class="cap" style="left:0;top:406px;width:165px"><span style="position:relative;left:-14px">Properties - Module1</span></div>
<div class="xbtn" style="left:144px;top:407px"></div>
<div class="a sunk" style="left:-10px;top:432px;width:172px;height:18px;background:#fff"></div>
<div class="a" style="left:-10px;top:473px;width:175px;height:400px;background:#F0F0F0;border-top:1px solid #fff;border-right:1px solid #696969;box-shadow:inset -1px 0 #A0A0A0"></div>
<div class="a" style="left:-10px;top:475px;width:172px;height:400px;background:#fff;border-top:1px solid #A0A0A0;border-right:1px solid #fff;box-shadow:inset 0 1px #696969, inset -1px 0 #E3E3E3"></div>
<div class="a" style="left:160px;top:475px;width:1px;height:400px;background:#696969"></div>
<div class="a" style="left:158px;top:477px;width:1px;height:400px;background:#E3E3E3"></div>
<div class="a" style="left:0;top:493px;width:158px;height:1px;background:#C8C8C8"></div>
<div class="a" style="left:30px;top:477px;width:1px;height:16px;background:#C8C8C8"></div>
<div class="a" style="left:0;top:477px;width:30px;height:16px;background:#F0F0F0"></div>
<div class="a ti" style="left:-8px;top:478px">(Name)</div>
<div class="a ti" style="left:32px;top:478px">Module1</div>
<!-- tabs -->
<div class="a" style="left:-20px;top:454px;width:71px;height:21px;background:#F0F0F0;border-top:1px solid #fff;border-right:1px solid #696969;box-shadow:inset -1px 0 #A0A0A0"></div>
<div class="a ti" style="left:-8px;top:455px">Alphabetic</div>
<div class="a" style="left:51px;top:456px;width:68px;height:18px;background:#F0F0F0;border-top:1px solid #fff;border-left:1px solid #fff;border-right:1px solid #696969;box-shadow:inset -1px 0 #A0A0A0"></div>
<div class="a ti" style="left:54px;top:457px">Categorized</div>



<!-- close X glyphs -->
<svg class="a" style="left:147px;top:36px" width="14" height="14" viewBox="0 0 14 14"><path d="M1.8 1.8L12.2 12.2M12.2 1.8L1.8 12.2" stroke="#000" stroke-width="1.8" fill="none"/></svg>
<svg class="a" style="left:147px;top:410px" width="14" height="14" viewBox="0 0 14 14"><path d="M1.8 1.8L12.2 12.2M12.2 1.8L1.8 12.2" stroke="#000" stroke-width="1.8" fill="none"/></svg>
<!-- project toolbar buttons -->
<svg class="a" style="left:-7px;top:62px" width="16" height="13" viewBox="0 0 16 13"><rect x="0.5" y="0.5" width="14" height="12" fill="#F4F8FC" stroke="#3A5C8E"/><rect x="1" y="1" width="13" height="2" fill="#4A78C0"/><path d="M3 5.5h3M8 5.5h4M3 8.5h3M8 8.5h4" stroke="#E04020" stroke-width="1.3"/><path d="M3 7h9" stroke="#5070A0" stroke-width=".8"/></svg>
<svg class="a" style="left:16px;top:61px" width="16" height="14" viewBox="0 0 16 14"><rect x="0.5" y="0.5" width="15" height="13" fill="#F0F0F0" stroke="#C8C8C8"/><rect x="1" y="1" width="14" height="2" fill="#D8D8D8"/><path d="M3 5.5h3M3 9.5h3" stroke="#B8B8B8"/><rect x="7.5" y="4.5" width="6" height="3" fill="none" stroke="#C0C0C0"/><rect x="7.5" y="8.5" width="6" height="3" fill="none" stroke="#C0C0C0"/></svg>
<div class="a" style="left:38px;top:61px;width:1px;height:14px;background:#B0B0B0"></div>
<div class="a" style="left:42px;top:57px;width:24px;height:23px;background:#E3EEF8;border:1px solid #3C8CDC"></div>
<svg class="a" style="left:45px;top:62px" width="16" height="13" viewBox="0 0 16 13"><defs><linearGradient id="fg" x1="0" y1="0" x2="1" y2="1"><stop offset="0" stop-color="#FFF0A8"/><stop offset="1" stop-color="#C89020"/></linearGradient></defs><path d="M0.5 1.5h5l1 1.5h8.5v9.5h-14.5z" fill="url(#fg)" stroke="#7A6030"/><path d="M0.5 4.5h15" stroke="#E8C868"/></svg>
<!-- toolbar overflow grip in project -->
<div class="a" style="left:153px;top:56px;width:12px;height:25px;background:#ABABAB;border-radius:0 4px 4px 0"></div>
<svg class="a" style="left:156px;top:70px" width="8" height="9" viewBox="0 0 8 9" shape-rendering="crispEdges"><rect x="1" y="1" width="5" height="1" fill="#000"/><rect x="1" y="2" width="6" height="1" fill="#fff"/><path d="M1 3.5h5.5l-2.75 3.5z" fill="#000" shape-rendering="auto"/><path d="M4 7.5l2.5-3" stroke="#fff" stroke-width="1" shape-rendering="auto"/></svg>
<svg class="a" style="left:642px;top:21px" width="8" height="9" viewBox="0 0 8 9" shape-rendering="crispEdges"><rect x="1" y="1" width="5" height="1" fill="#000"/><rect x="1" y="2" width="6" height="1" fill="#fff"/><path d="M1 3.5h5.5l-2.75 3.5z" fill="#000" shape-rendering="auto"/><path d="M4 7.5l2.5-3" stroke="#fff" stroke-width="1" shape-rendering="auto"/></svg>
<!-- tree scrollbar arrows -->
<svg class="a" style="left:150px;top:90px" width="10" height="8" viewBox="0 0 10 8"><path d="M1.3 6.3L5 2.5L8.7 6.3" stroke="#606060" stroke-width="2" fill="none"/></svg>
<svg class="a" style="left:150px;top:369px" width="9" height="6" viewBox="0 0 9 6"><path d="M0.5 1L4.5 5L8.5 1" stroke="#606060" stroke-width="1.6" fill="none"/></svg>
<svg class="a" style="left:134px;top:385px" width="6" height="9" viewBox="0 0 6 9"><path d="M1 0.5L5 4.5L1 8.5" stroke="#606060" stroke-width="1.6" fill="none"/></svg>
<div class="a" style="left:164px;top:84px;width:1px;height:315px;background:#fff"></div>
<div class="a" style="left:0;top:398px;width:164px;height:1px;background:#E3E3E3"></div>
<div class="a" style="left:0;top:399px;width:165px;height:1px;background:#fff"></div>
<!-- properties content -->
<div class="a" style="left:-10px;top:434px;width:152px;height:15px;font-size:12px;line-height:16px;white-space:nowrap;overflow:hidden"><span style="position:relative;left:-2px"><b>Module1</b> <span style="font-size:11px">Module</span></span></div>
<div class="ddb" style="left:144px;top:433px;width:17px;height:16px"><svg width="15" height="14" style="position:absolute;left:0;top:0"><path d="M5 6H10L7.5 8.5Z" fill="#000"/></svg></div>

<!-- code window -->
<div class="a" style="left:171px;top:32px;width:940px;height:840px;border-top:1px solid #A0A0A0;border-left:1px solid #A0A0A0;box-shadow:inset 1px 1px #696969"></div>
<div class="a sunk" style="left:183px;top:36px;width:835px;height:21px;background:#fff"></div>
<div class="a sunk" style="left:1029px;top:36px;width:100px;height:21px;background:#fff"></div>
<!-- combo texts -->
<div class="a" style="left:187px;top:39px;font-size:11.5px;font-weight:bold;line-height:14px;white-space:nowrap">(General)</div>
<div class="ddb" style="left:1000px;top:38px;width:17px;height:18px"><svg width="15" height="16" style="position:absolute;left:0;top:0"><path d="M4 6H11L7.5 10Z" fill="#000"/></svg></div>
<div class="a" style="left:1033px;top:39px;font-size:11.5px;font-weight:bold;line-height:14px;white-space:nowrap">AddKenoTimes</div>

<div class="a" style="left:173px;top:60px;width:940px;height:1px;background:#A0A0A0"></div>
<div class="a" style="left:173px;top:61px;width:940px;height:1px;background:#696969"></div>
<div class="a" style="left:173px;top:62px;width:1px;height:802px;background:#A0A0A0"></div>
<div class="a" style="left:174px;top:62px;width:1px;height:802px;background:#696969"></div>
<div class="a" style="left:175px;top:62px;width:1px;height:802px;background:#fff"></div>
<div class="a" style="left:195px;top:62px;width:1px;height:802px;background:#000"></div>
<div class="code"><pre><span class="k">Option Explicit</span>
<span class="k">Public</span> gbRestoringDraws <span class="k">As Boolean</span>
<span class="k">Public</span> gbNoSelection <span class="k">As Boolean</span>
<span class="k">Public</span> gbNoSelectionWI <span class="k">As Boolean</span>
<span class="k">Public</span> gbTop10 <span class="k">As Boolean</span>
<span class="k">Public</span> gbBDBW <span class="k">As Boolean</span>
<span class="k">Public</span> Ctrl <span class="k">As</span> Control
<span class="k">Public</span> CBs(1 <span class="k">To</span> 80) <span class="k">As New</span> CtrlClass
<span class="k">Public</span> CBWins(1 <span class="k">To</span> 80) <span class="k">As New</span> ctrlClassWins
<span class="k">Public</span> gbNoHits <span class="k">As Boolean</span>

<span class="k">Sub</span> AddKenoTimes(<span class="k">Optional</span> bManualDraws <span class="k">As Boolean</span> = <span class="k">False</span>)
<span class="k">Dim</span> wsWNR <span class="k">As</span> Worksheet
<span class="k">Dim</span> rngFound <span class="k">As</span> Range
<span class="k">Dim</span> lngOneDrawStart <span class="k">As Long</span>
<span class="k">Dim</span> lngTwoDrawStart <span class="k">As Long</span>
<span class="k">Dim</span> lngLastRow <span class="k">As Long</span>
<span class="k">Dim</span> lngRow <span class="k">As Long</span>
<span class="k">Dim</span> lngTime <span class="k">As Long</span>
<span class="k">Dim</span> lngR <span class="k">As Long</span>
<span class="k">Dim</span> varTimes <span class="k">As Variant</span>

varTimes = Array("10 AM", "1 PM", "3 PM", "6 PM")

<span class="k">Set</span> wsWNR = Sheet3

lngLastRow = wsWNR.Cells.Find("*", SearchOrder:=xlByRows, SearchDirection:=xlPrevious).Row

<span class="k">With</span> Application
    .EnableEvents = <span class="k">False</span>
    .ScreenUpdating = <span class="k">False</span>
    .Calculation = xlCalculationManual
<span class="k">End With</span>

<span class="k">With</span> wsWNR
    .Range("Y7") = "Time"
    .Range("W7").Copy
    .Range("Y7").PasteSpecial xlPasteFormats

    <span class="k">If</span> bManualDraws <span class="k">Then</span>
        <span class="k">For</span> lngRow = 8 <span class="k">To</span> lngLastRow
            <span class="k">If Not</span> IsEmpty(.Cells(lngRow, "Y")) <span class="k">Then</span>
                <span class="k">Select Case</span> .Cells(lngRow, "Y")
                    <span class="k">Case</span> "10 AM"
                        lngTime = 1
                    <span class="k">Case</span> "1 PM"
                        lngTime = 2
                    <span class="k">Case</span> "3 PM"
                        lngTime = 3
                    <span class="k">Case</span> "6 PM"
</pre></div>
<div class="a" style="left:196px;top:223px;width:905px;height:1px;background:#808080"></div>

<!-- Find dialog -->
<div class="a" style="left:677px;top:261px;width:374px;height:167px;box-shadow:1px 3px 12px rgba(0,0,0,0.33)"></div>
<div class="a" style="left:677px;top:261px;width:374px;height:167px;background:#F0F0F0;border:1px solid #707070;box-shadow:inset -1px -1px #fff"></div>
<div class="a" style="left:678px;top:262px;width:372px;height:30px;background:#fff"></div>
<div class="a t12" style="left:686px;top:270px">Find</div>
<svg class="a" style="left:1029px;top:270px" width="12" height="12" viewBox="0 0 12 12"><path d="M1 1L11 11M11 1L1 11" stroke="#000" stroke-width="1.1" fill="none"/></svg>
<div class="a t11" style="left:690px;top:305px"><u>F</u>ind What:</div>
<div class="a sunk" style="left:768px;top:299px;width:191px;height:21px;background:#fff"></div>
<div class="a t11" style="left:773px;top:302px">ShowHitsMon</div>
<div class="a ddb" style="left:941px;top:301px;width:17px;height:17px"><svg width="15" height="15" style="position:absolute;left:0;top:0"><path d="M4 6H11L7.5 10Z" fill="#000"/></svg></div>
<div class="btn" style="left:972px;top:302px;color:#A0A0A0">Find <u>N</u>ext</div>
<div class="btn" style="left:972px;top:329px">Cancel</div>
<div class="btn" style="left:972px;top:367px;color:#A0A0A0"><u>R</u>eplace...</div>
<div class="btn" style="left:972px;top:394px"><u>H</u>elp</div>
<div class="a" style="left:690px;top:329px;width:127px;height:91px;border:1px solid #A0A0A0;box-shadow:inset 1px 1px #fff, 1px 1px #fff"></div>
<div class="a t11" style="left:697px;top:323px;background:#F0F0F0;padding:0 2px">Search</div>
<div class="radio" style="left:699px;top:340px"></div>
<div class="radio" style="left:699px;top:361px"><div style="position:absolute;left:4px;top:4px;width:4px;height:4px;border-radius:2px;background:#000"></div></div>
<div class="radio" style="left:699px;top:382px"></div>
<div class="radio" style="left:699px;top:402px"></div>
<div class="a t11" style="left:716px;top:340px">Current <u>P</u>rocedure</div>
<div class="a t11" style="left:716px;top:361px">Current <u>M</u>odule</div>
<div class="a t11" style="left:716px;top:382px"><u>C</u>urrent Project</div>
<div class="a t11" style="left:716px;top:402px;color:#A0A0A0">Selected <u>T</u>ext</div>
<div class="a t11" style="left:825px;top:333px"><u>D</u>irection:</div>
<div class="a sunk" style="left:879px;top:329px;width:73px;height:21px;background:#fff"></div>
<div class="a" style="left:882px;top:332px;width:51px;height:15px;background:#0078D7;outline:1px dotted #000;outline-offset:-1px;color:#fff;font-size:11px;line-height:15px;padding-left:1px">All</div>
<div class="a ddb" style="left:934px;top:331px;width:17px;height:17px"><svg width="15" height="15" style="position:absolute;left:0;top:0"><path d="M4 6H11L7.5 10Z" fill="#000"/></svg></div>
<div class="chk" style="left:825px;top:361px"></div>
<div class="chk" style="left:825px;top:381px"></div>
<div class="chk" style="left:825px;top:400px"></div>
<div class="a t11" style="left:842px;top:361px">Find Whole Word <u>O</u>nly</div>
<div class="a t11" style="left:842px;top:381px">Match Ca<u>s</u>e</div>
<div class="a t11" style="left:842px;top:400px"><u>U</u>se Pattern Matching</div>
</body></html>
